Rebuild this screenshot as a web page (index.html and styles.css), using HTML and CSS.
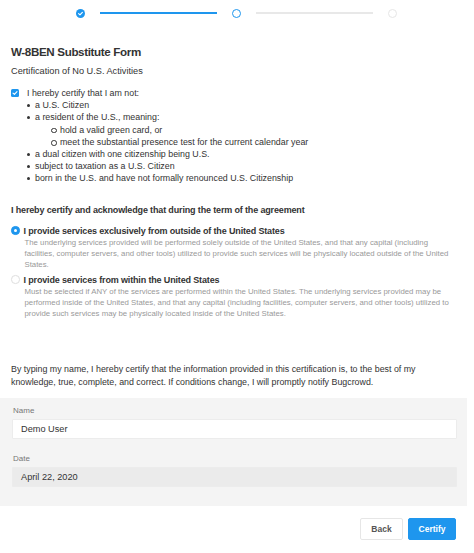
FILE: index.html
```html
<!DOCTYPE html>
<html>
<head>
<meta charset="utf-8">
<link rel="stylesheet" href="styles.css">
</head>
<body>
<div class="page">
  <div class="stepper">
    <span class="step done">
      <svg viewBox="0 0 10 10" width="9" height="9"><circle cx="5" cy="5" r="5" fill="#1e96ee"/><path d="M2.9 5.1 L4.4 6.5 L7.1 3.7" fill="none" stroke="#fff" stroke-width="1.3" stroke-linecap="round" stroke-linejoin="round"/></svg>
    </span>
    <span class="line active"></span>
    <span class="step current"></span>
    <span class="line"></span>
    <span class="step todo"></span>
  </div>

  <div class="content">
    <h1 class="title">W-8BEN Substitute Form</h1>
    <h2 class="subtitle">Certification of No U.S. Activities</h2>

    <div class="certify">
      <span class="checkbox">
        <svg viewBox="0 0 8 8" width="8" height="8"><rect x="0" y="0" width="8" height="8" rx="1.5" fill="#1e96ee"/><path d="M2 4.1 L3.4 5.4 L6 2.7" fill="none" stroke="#fff" stroke-width="1.1" stroke-linecap="round" stroke-linejoin="round"/></svg>
      </span>
      <div class="certify-body">
        <div class="certify-text">I hereby certify that I am not:</div>
        <ul class="list">
          <li>a U.S. Citizen</li>
          <li>a resident of the U.S., meaning:
            <ul class="sublist">
              <li>hold a valid green card, or</li>
              <li>meet the substantial presence test for the current calendar year</li>
            </ul>
          </li>
          <li>a dual citizen with one citizenship being U.S.</li>
          <li>subject to taxation as a U.S. Citizen</li>
          <li>born in the U.S. and have not formally renounced U.S. Citizenship</li>
        </ul>
      </div>
    </div>

    <h3 class="section">I hereby certify and acknowledge that during the term of the agreement</h3>

    <div class="option">
      <span class="radio selected"></span>
      <div class="option-body">
        <div class="option-label">I provide services exclusively from outside of the United States</div>
        <div class="option-desc">The underlying services provided will be performed solely outside of the United States, and that any capital (including facilities, computer servers, and other tools) utilized to provide such services will be physically located outside of the United States.</div>
      </div>
    </div>

    <div class="option">
      <span class="radio"></span>
      <div class="option-body">
        <div class="option-label">I provide services from within the United States</div>
        <div class="option-desc">Must be selected if ANY of the services are performed within the United States. The underlying services provided may be performed inside of the United States, and that any capital (including facilities, computer servers, and other tools) utilized to provide such services may be physically located inside of the United States.</div>
      </div>
    </div>

    <p class="statement">By typing my name, I hereby certify that the information provided in this certification is, to the best of my knowledge, true, complete, and correct. If conditions change, I will promptly notify Bugcrowd.</p>
  </div>

  <div class="panel">
    <label class="field-label">Name</label>
    <div class="input">Demo User</div>
    <label class="field-label">Date</label>
    <div class="input disabled">April 22, 2020</div>
  </div>

  <div class="actions">
    <button class="btn btn-back">Back</button>
    <button class="btn btn-primary">Certify</button>
  </div>
</div>
</body>
</html>
```

FILE: styles.css
```css
* { box-sizing: border-box; }
html, body { margin: 0; padding: 0; background: #fff; }
body {
  font-family: "Liberation Sans", Arial, sans-serif;
  color: #333;
  -webkit-font-smoothing: antialiased;
}
.page { width: 467px; }

.stepper {
  display: flex;
  align-items: center;
  height: 26px;
  padding-left: 76px;
  gap: 15px;
}
.step { width: 9px; height: 9px; border-radius: 50%; display: block; flex: none; }
.step svg { display: block; }
.step.current { border: 1.5px solid #1e96ee; }
.step.todo { border: 1.5px solid #e6e6e6; }
.line { width: 117px; height: 1.5px; background: #e8e8e8; flex: none; }
.line.active { background: #1e96ee; }

.content { padding: 0 11px; }
.title {
  margin: 18px 0 0;
  font-size: 11.6px;
  letter-spacing: -0.35px;
  line-height: 16px;
  font-weight: 700;
  color: #333;
}
.subtitle {
  margin: 4.5px 0 0;
  font-size: 9.2px;
  line-height: 12px;
  font-weight: 400;
  color: #333;
}

.certify { display: flex; margin-top: 10.5px; font-size: 8.85px; line-height: 12.2px; color: #333; }
.checkbox { width: 8px; height: 8px; margin-top: 2.3px; margin-right: 8px; flex: none; }
.checkbox svg { display: block; }
.list { margin: 0; padding: 0; list-style: none; }
.list > li { position: relative; padding-left: 8px; }
.list > li::before {
  content: "";
  position: absolute; left: 0; top: 5px;
  width: 3px; height: 3px; border-radius: 50%; background: #333;
}
.sublist { margin: 0; padding: 0 0 0 25px; list-style: none; }
.sublist > li { position: relative; }
.sublist > li::before {
  content: "";
  position: absolute; left: -9px; top: 4.3px;
  width: 3.5px; height: 3.5px; border-radius: 50%; border: 0.8px solid #333;
}

.section {
  margin: 19px 0 0;
  font-size: 9px;
  letter-spacing: -0.15px;
  line-height: 12px;
  font-weight: 700;
  color: #333;
}

.option { display: flex; margin-top: 9px; }
.option + .option { margin-top: 3px; }
.radio {
  width: 8.5px; height: 8.5px; border-radius: 50%;
  border: 1px solid #dedede; flex: none; margin-top: 1.8px; margin-right: 4px;
  background: #fff;
}
.radio.selected { background: #1e96ee; border-color: #1e96ee; position: relative; }
.radio.selected::after {
  content: ""; position: absolute; left: 50%; top: 50%;
  width: 3px; height: 3px; margin: -1.5px 0 0 -1.5px; border-radius: 50%; background: #fff;
}
.option-label { font-size: 9px; letter-spacing: -0.15px; line-height: 12px; font-weight: 700; color: #333; }
.option-desc { font-size: 7.8px; line-height: 11.3px; color: #999; margin-top: 0; padding-left: 1px; }

.statement {
  margin: 44px 0 0;
  font-size: 8.85px;
  line-height: 13px;
  color: #333;
}

.panel {
  margin-top: 9px;
  background: #f4f4f4;
  padding: 7px 10px 19px 12px;
}
.field-label { display: block; font-size: 8px; line-height: 11px; color: #777; margin: 0 0 3px 1px; }
.input {
  height: 20px;
  background: #fff;
  border: 1px solid #ececec;
  border-radius: 1px;
  padding: 0 8px;
  font-size: 9.2px;
  line-height: 18px;
  color: #333;
  margin-bottom: 14px;
}
.input.disabled { background: #ebebeb; margin-bottom: 0; }

.actions {
  display: flex;
  justify-content: flex-end;
  gap: 5px;
  padding: 12px 11px 0 0;
}
.btn {
  height: 22px;
  border-radius: 2px;
  font-family: inherit;
  font-size: 8.5px;
  font-weight: 700;
  padding: 0;
}
.btn-back { width: 43px; background: #fff; border: 1px solid #e6e6e6; color: #555; }
.btn-primary { width: 48px; background: #1e96ee; border: 1px solid #1e96ee; color: #fff; }
```
